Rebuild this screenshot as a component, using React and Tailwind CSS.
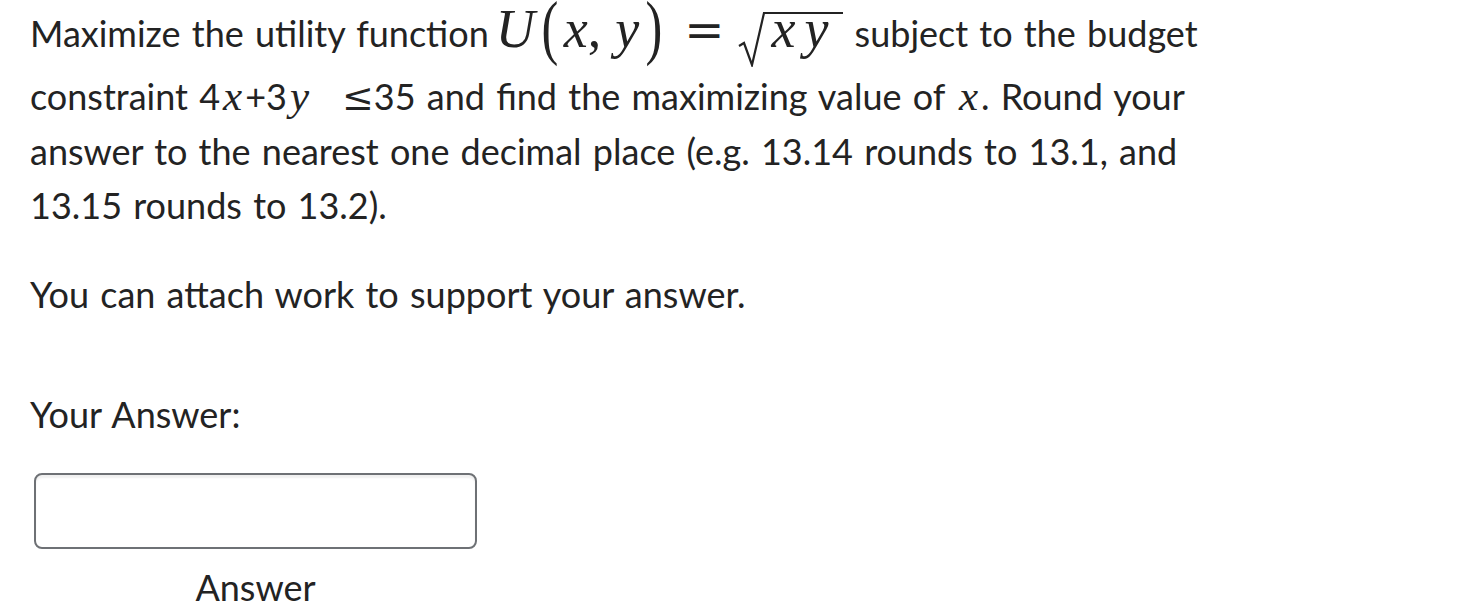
import React from 'react';

const serif = "font-['Liberation_Serif',serif]";
const dejavu = "font-['DejaVu_Serif',serif]";

// italic math letter inside running text
const Mi = ({ children }) => (
  <span className={`${serif} italic text-[43px] mx-[3px]`}>{children}</span>
);

// tall stretched delimiter
const Paren = ({ children, className = '' }) => (
  <span
    className={`${serif} inline-block h-[64px] text-[72px] leading-[64px] -translate-y-[8px] scale-x-[0.7] ${className}`}
  >
    {children}
  </span>
);

// U(x, y) = sqrt(xy)
const UtilityFormula = () => (
  <span className={`${serif} inline-flex items-start h-[66px] ml-[7px] text-[54px] [word-spacing:0px]`}>
    <span className="italic leading-[52px] mr-[3px]">U</span>
    <Paren>(</Paren>
    <span className="italic leading-[52px] ml-[2px]">x</span>
    <span className="leading-[52px] mr-[14px]">,</span>
    <span className="italic leading-[52px]">y</span>
    <Paren className="ml-[3px]">)</Paren>
    <span className={`${dejavu} text-[48px] leading-[52px] mt-[1px] ml-[18px] mr-[14px]`}>=</span>
    <span className="flex items-start mt-[9px]">
      <svg width="28" height="55" viewBox="0 0 28 55" className="block">
        <path
          d="M1 34 L6 31 L14 53 L26 1 L28 1"
          fill="none"
          stroke="#232323"
          strokeWidth="2.2"
        />
      </svg>
      <span className="italic leading-[30px] border-t-2 border-[#232323] pl-[5px] pr-[6px] tracking-[9px]">xy</span>
    </span>
  </span>
);

const App = () => {
  return (
    <div className="min-h-screen bg-white text-[#232323] font-['Lato','Noto_Sans',sans-serif] text-[36px] leading-[54px] [word-spacing:2px]">
      <div className="pl-[30px] pt-[3px]">
        {/* Question text */}
        <p className="w-[1200px]">
          Maximize the utility function
          <UtilityFormula /> subject to the budget constraint 4<Mi>x</Mi>+3<Mi>y</Mi>
          <span className={`${dejavu} text-[38px] ml-[30px]`}>≤</span>35 and find the maximizing
          value of <Mi>x</Mi>. Round your answer to the nearest one decimal place (e.g. 13.14
          rounds to 13.1, and 13.15 rounds to 13.2).
        </p>

        <p className="mt-[35px]">You can attach work to support your answer.</p>

        {/* Answer field */}
        <p className="mt-[66px]">Your Answer:</p>
        <div className="mt-[32px] ml-[4px] w-[443px]">
          <input
            type="text"
            aria-label="Answer"
            className="block w-full h-[76px] bg-white border-2 border-[#6e7175] rounded-[8px] shadow-[inset_0_3px_2px_rgba(0,0,0,0.06)] outline-none px-4"
          />
          <div className="text-center mt-[11px]">Answer</div>
        </div>
      </div>
    </div>
  );
};

export default App;
